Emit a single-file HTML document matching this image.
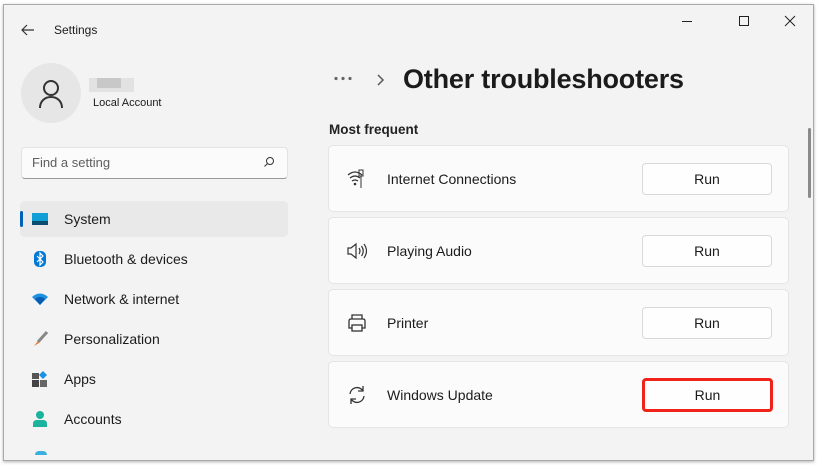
<!DOCTYPE html>
<html><head><meta charset="utf-8"><style>
*{box-sizing:border-box;margin:0;padding:0}
body{width:818px;height:465px;background:#fff;font-family:"Liberation Sans",sans-serif;position:relative;overflow:hidden;color:#1b1b1b}
.win{position:absolute;left:3px;top:4px;width:811px;height:457px;background:#f3f3f3;border:1px solid #a9a9a9;box-shadow:0 1px 3px rgba(0,0,0,.3);overflow:hidden}
.a{position:absolute}
.nav{position:absolute;left:16px;width:268px;height:36px;border-radius:5px;font-size:14px;display:flex;align-items:center}
.nav span{position:absolute;left:44px}
.nav svg{position:absolute;left:12px}
.card{position:absolute;left:324px;width:461px;height:67px;background:#fbfbfb;border:1px solid #e5e5e5;border-radius:5px}
.card .lbl{position:absolute;left:58px;top:25px;font-size:14px}
.card svg{position:absolute;left:18px;top:23px}
.btn{position:absolute;left:313px;top:17px;width:130px;height:32px;background:#fefefe;border:1px solid #d8d8d8;border-radius:4px;font-size:14px;text-align:center;line-height:30px}
</style></head><body>
<div class="win">
<svg class="a" style="left:17px;top:19px" width="14" height="12" viewBox="0 0 14 12"><path d="M13 6H1M6 1L1 6l5 5" fill="none" stroke="#333" stroke-width="1.2"/></svg>
<div class="a" style="left:50px;top:18px;font-size:12px">Settings</div>
<svg class="a" style="left:677px;top:10px" width="12" height="12"><path d="M1 6.5h10" stroke="#222"/></svg>
<svg class="a" style="left:734px;top:10px" width="12" height="12"><rect x="1.5" y="1.5" width="9" height="9" fill="none" stroke="#222"/></svg>
<svg class="a" style="left:780px;top:10px" width="12" height="12"><path d="M1 1l10 10M11 1L1 11" stroke="#222"/></svg>
<div class="a" style="left:17px;top:58px;width:60px;height:60px;border-radius:50%;background:#e6e6e6"></div>
<svg class="a" style="left:33px;top:74px" width="28" height="30" viewBox="0 0 28 30"><circle cx="14" cy="9" r="7" fill="none" stroke="#333" stroke-width="2"/><path d="M3 29c0-7 5-11 11-11s11 4 11 11" fill="none" stroke="#333" stroke-width="2"/></svg>
<div class="a" style="left:85px;top:73px;width:45px;height:14px;background:#e2e2e2"></div>
<div class="a" style="left:93px;top:73px;width:24px;height:10px;background:#c8c8c8"></div>
<div class="a" style="left:89px;top:92px;font-size:11px">Local Account</div>
<div class="a" style="left:17px;top:142px;width:267px;height:32px;background:#fbfbfb;border:1px solid #e3e3e3;border-bottom-color:#999;border-radius:4px"></div>
<div class="a" style="left:28px;top:150px;font-size:13px;color:#5e5e5e">Find a setting</div>
<svg class="a" style="left:259px;top:151px" width="12" height="12" viewBox="0 0 12 12"><circle cx="7" cy="5" r="3.5" fill="none" stroke="#333"/><path d="M4.5 7.5L1.5 10.5" stroke="#333"/></svg>
<div class="nav" style="top:196px;background:#e9e9e9"><div class="a" style="left:0;top:10px;width:3px;height:16px;background:#005fb8;border-radius:2px"></div><svg width="16" height="12"><rect width="16" height="12" fill="#0f9fd6"/><rect y="8" width="16" height="4" fill="#0b4d6e"/></svg><span>System</span></div>
<div class="nav" style="top:236px"><svg width="12" height="16" style="left:14px"><rect width="12" height="16" rx="5" fill="#0078d4"/><path d="M3 5l6 6-3 3V2l3 3-6 6" fill="none" stroke="#fff" stroke-width="1.2"/></svg><span>Bluetooth &amp; devices</span></div>
<div class="nav" style="top:276px"><svg width="16" height="12"><path d="M0 4q8-7 16 0L8 12z" fill="#1e90e0"/><path d="M3 6q5-4 10 0L8 12z" fill="#0a5cb0"/></svg><span>Network &amp; internet</span></div>
<div class="nav" style="top:316px"><svg width="16" height="16"><path d="M15 1L6 11" stroke="#888" stroke-width="3"/><path d="M6 10l-4 5 5-3z" fill="#f07a20"/></svg><span>Personalization</span></div>
<div class="nav" style="top:356px"><svg width="16" height="16"><rect x="0" y="2" width="7" height="6" fill="#555"/><rect x="0" y="9" width="7" height="7" fill="#444"/><rect x="8" y="9" width="7" height="7" fill="#666"/><path d="M11 0l4 4-4 4-4-4z" fill="#1a8fe3"/></svg><span>Apps</span></div>
<div class="nav" style="top:396px"><svg width="16" height="16"><circle cx="8" cy="4" r="4" fill="#1bb39d"/><path d="M1 16v-3q0-4 4-4h6q4 0 4 4v3z" fill="#1bb39d"/></svg><span>Accounts</span></div>
<div class="a" style="left:31px;top:446px;width:12px;height:4px;border-radius:6px 6px 0 0;background:#3ab0e0"></div>
<svg class="a" style="left:329px;top:71px" width="22" height="5"><circle cx="3" cy="2.5" r="1.6" fill="#666"/><circle cx="10" cy="2.5" r="1.6" fill="#666"/><circle cx="17" cy="2.5" r="1.6" fill="#666"/></svg>
<svg class="a" style="left:373px;top:69px" width="8" height="12"><path d="M1 1l5 5-5 5" fill="none" stroke="#555" stroke-width="1.5"/></svg>
<div class="a" style="left:399px;top:59px;font-size:27px;font-weight:bold;color:#1b1b1b;letter-spacing:-0.2px">Other troubleshooters</div>
<div class="a" style="left:325px;top:117px;font-size:13.5px;font-weight:bold;color:#222">Most frequent</div>
<div class="card" style="top:140px"><svg width="20" height="20"><path d="M1 6q7-6 14 0M3 9q5-4 10 0M5 12q3-2 6 0" fill="none" stroke="#333" stroke-width="1.2"/><circle cx="8" cy="15" r="1.3" fill="#333"/><rect x="12" y="1" width="4" height="6" fill="none" stroke="#333"/><path d="M14 7v12" stroke="#333"/></svg><div class="lbl">Internet Connections</div><div class="btn">Run</div></div>
<div class="card" style="top:212px"><svg width="20" height="20"><path d="M1 7h3l5-4v14l-5-4H1z" fill="none" stroke="#333" stroke-width="1.2"/><path d="M12 7q2 3 0 6M14.5 5q3.5 5 0 10M17 3q5 7 0 14" fill="none" stroke="#333" stroke-width="1.2"/></svg><div class="lbl">Playing Audio</div><div class="btn">Run</div></div>
<div class="card" style="top:284px"><svg width="20" height="20"><path d="M5 6V2h10v4M5 15H2V8q0-2 2-2h12q2 0 2 2v7h-3" fill="none" stroke="#333" stroke-width="1.3"/><rect x="5" y="12" width="10" height="6" fill="none" stroke="#333" stroke-width="1.3"/></svg><div class="lbl">Printer</div><div class="btn">Run</div></div>
<div class="card" style="top:356px"><svg width="20" height="20"><path d="M3 9a7 7 0 0 1 13-3M17 11a7 7 0 0 1-13 3" fill="none" stroke="#333" stroke-width="1.3"/><path d="M16 1v5h-5M4 19v-5h5" fill="none" stroke="#333" stroke-width="1.3"/></svg><div class="lbl">Windows Update</div><div class="btn" style="border:3px solid #f0221a;line-height:28px;height:34px;left:313px;top:16px;width:131px">Run</div></div>
<div class="a" style="left:804px;top:123px;width:3px;height:70px;background:#8a8a8a;border-radius:2px"></div>
</div>
</body></html>
